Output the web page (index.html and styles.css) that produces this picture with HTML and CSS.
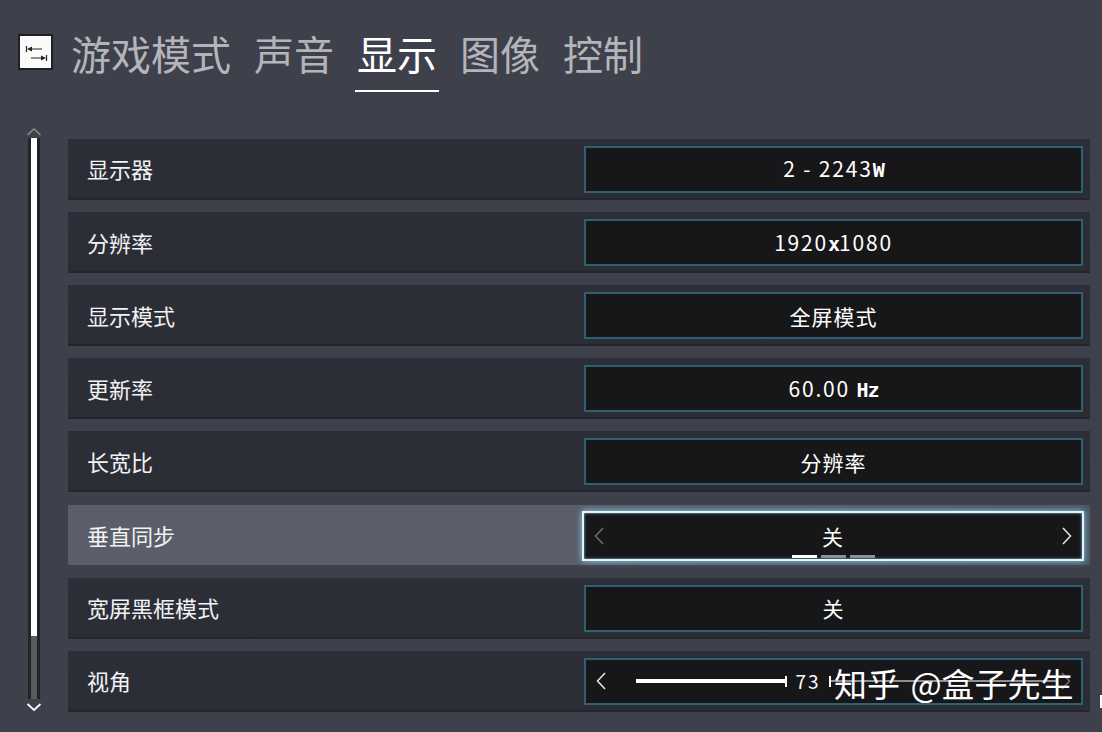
FILE: index.html
```html
<!DOCTYPE html>
<html lang="zh-CN">
<head>
  <meta charset="UTF-8" />
  <title>显示</title>
  <link rel="stylesheet" href="styles.css">
</head>
<body>
  <header class="tabs">
    <div class="tabs-icon">
      <svg width="27" height="27" viewBox="0 0 27 27">
        <path d="M4.500 7v6M8 10h12M24.500 16v6M9 19h12" fill="none" stroke="#222" stroke-width="1.200"/>
        <path d="M5 10l5-2.500v5zM24 19l-5-2.500v5z" fill="#222"/>
      </svg>
    </div>
    <a class="tab">游戏模式</a>
    <a class="tab">声音</a>
    <a class="tab active">显示</a>
    <a class="tab">图像</a>
    <a class="tab">控制</a>
  </header>

  <main class="content">
    <div class="scroll">
      <svg class="chevron" width="16" height="9" viewBox="0 0 16 9"><path d="M1.500 8L8 2l6.500 6" fill="none" stroke="#8b8d93" stroke-width="1.500"/></svg>
      <div class="scroll-track"><div class="scroll-thumb"></div></div>
      <svg class="chevron" width="16" height="9" viewBox="0 0 16 9"><path d="M1.500 1L8 7l6.500-6" fill="none" stroke="#fff" stroke-width="1.800"/></svg>
    </div>

    <div class="rows">
      <div class="row">
        <span class="label">显示器</span>
        <div class="box"><span class="value latin">2 - 2243<b class="alt">W</b></span></div>
      </div>
      <div class="row">
        <span class="label">分辨率</span>
        <div class="box"><span class="value latin">1920<b class="alt">x</b>1080</span></div>
      </div>
      <div class="row">
        <span class="label">显示模式</span>
        <div class="box"><span class="value">全屏模式</span></div>
      </div>
      <div class="row">
        <span class="label">更新率</span>
        <div class="box"><span class="value latin">60.00 <b class="alt">Hz</b></span></div>
      </div>
      <div class="row">
        <span class="label">长宽比</span>
        <div class="box"><span class="value">分辨率</span></div>
      </div>
      <div class="row selected">
        <span class="label">垂直同步</span>
        <div class="box focus">
          <svg class="arrow dim" width="10" height="18" viewBox="0 0 10 18"><path d="M9 1L1.500 9 9 17" fill="none" stroke="currentColor" stroke-width="1.500"/></svg>
          <span class="value">关</span>
          <svg class="arrow" width="10" height="18" viewBox="0 0 10 18"><path d="M1 1l7.500 8L1 17" fill="none" stroke="currentColor" stroke-width="1.500"/></svg>
          <div class="pips"><i class="pip on"></i><i class="pip"></i><i class="pip"></i></div>
        </div>
      </div>
      <div class="row">
        <span class="label">宽屏黑框模式</span>
        <div class="box"><span class="value">关</span></div>
      </div>
      <div class="row">
        <span class="label">视角</span>
        <div class="box slider">
          <svg class="arrow" width="10" height="18" viewBox="0 0 10 18"><path d="M9 1L1.500 9 9 17" fill="none" stroke="currentColor" stroke-width="1.500"/></svg>
          <div class="fill"></div>
          <span class="slider-num">73</span>
          <div class="rest"></div>
          <svg class="arrow dim" width="10" height="18" viewBox="0 0 10 18"><path d="M1 1l7.500 8L1 17" fill="none" stroke="currentColor" stroke-width="1.500"/></svg>
        </div>
      </div>
    </div>
  </main>

  <div class="watermark">知乎 @盒子先生</div>
  <div class="edge-mark"></div>
</body>
</html>
```

FILE: styles.css
```css
html, body {
  margin: 0;
  height: 732px;
  overflow: hidden;
}
body {
  position: relative;
  box-sizing: border-box;
  padding: 0 12px 0 18px;
  background: #3e404b;
  color: #fff;
  font-family: "Noto Sans CJK SC", "Noto Sans", sans-serif;
}
.tabs {
  display: flex;
  align-items: flex-start;
  height: 127px;
}
.tabs-icon {
  display: flex;
  align-items: center;
  justify-content: center;
  box-sizing: border-box;
  width: 35px;
  height: 36px;
  margin-top: 34px;
  margin-right: 16px;
  background: #fafafa;
  border: 2px solid #1f2024;
}
.tab {
  box-sizing: border-box;
  height: 92px;
  margin-right: 19px;
  padding: 25px 2px 0;
  color: #b4b5ba;
  font-size: 40px;
  font-weight: 400;
  line-height: 56px;
  white-space: nowrap;
}
.tab.active {
  color: #fff;
  border-bottom: 2px solid #fff;
}
.content {
  display: flex;
  align-items: flex-start;
}
.scroll {
  display: flex;
  flex-direction: column;
  align-items: center;
  width: 32px;
  margin-right: 18px;
}
.chevron {
  display: block;
}
.scroll-track {
  box-sizing: border-box;
  width: 12px;
  height: 561px;
  margin: 2px 0 4px;
  padding: 0 3px;
  background: linear-gradient(#5a5b5e, #5a5b5e) center / 6px 100% no-repeat #232428;
}
.scroll-thumb {
  height: 498px;
  background: #fff;
}
.rows {
  display: flex;
  flex-direction: column;
  gap: 12.14px;
  flex: 1;
  margin-top: 11.9px;
}
.row {
  display: flex;
  align-items: center;
  justify-content: space-between;
  box-sizing: border-box;
  height: 61px;
  padding: 2px 7px 0 19px;
  background: linear-gradient(#2c2f38, #2b2d35);
  border-bottom: 2px solid #25262c;
}
.row.selected {
  height: 60px;
  margin-bottom: 1px;
  padding-right: 6px;
  background: linear-gradient(90deg, #5a5e69 0, #5a5e69 50%, #4b5560 100%);
  border-bottom: 0;
}
.label {
  margin-bottom: 2px;
  color: #f2f2f3;
  font-size: 22px;
  line-height: 30px;
}
.box {
  position: relative;
  display: flex;
  align-items: center;
  justify-content: center;
  box-sizing: border-box;
  width: 499px;
  height: 47px;
  background: #171719;
  border: 2px solid #2f5f72;
}
.value {
  font-size: 21px;
  letter-spacing: 1px;
  line-height: 30px;
  white-space: pre;
}
.value.latin {
  letter-spacing: 1.8px;
}
.alt {
  font-family: "DejaVu Sans Mono", monospace;
  font-size: 20px;
  font-weight: 700;
  letter-spacing: -1px;
}
.box.focus {
  justify-content: space-between;
  width: 502px;
  height: 50px;
  padding: 0 10px;
  border: 2px solid #e3f5fb;
  box-shadow: 0 0 6px #8fd8ef, inset 0 0 3px #7fc8e0;
}
.arrow {
  flex: none;
  color: #e8e8e8;
}
.arrow.dim {
  color: #6e6f71;
}
.pips {
  position: absolute;
  left: 208px;
  bottom: 1px;
  display: flex;
  gap: 4px;
}
.pip {
  width: 25px;
  height: 3px;
  background: #8e8f92;
}
.pip.on {
  background: #fff;
}
.box.slider {
  justify-content: flex-start;
  padding: 0 10px;
}
.fill {
  box-sizing: border-box;
  width: 151px;
  height: 11px;
  margin-left: 30px;
  background: linear-gradient(#fff, #fff) left center / 100% 4px no-repeat;
  border-right: 2px solid #fff;
}
.slider-num {
  width: 42px;
  text-align: center;
  font-size: 19px;
  letter-spacing: 2px;
  line-height: 24px;
}
.rest {
  box-sizing: border-box;
  flex: 1;
  height: 11px;
  margin-right: 4px;
  background: linear-gradient(#8e8f92, #8e8f92) left center / 100% 2px no-repeat;
  border-left: 2px solid #fff;
}
.watermark {
  position: absolute;
  left: 834px;
  top: 658px;
  color: #fff;
  font-size: 33px;
  word-spacing: 3px;
  line-height: 50px;
  white-space: nowrap;
}
.edge-mark {
  position: absolute;
  left: 1100px;
  top: 695px;
  width: 2px;
  height: 13px;
  background: #fff;
}
```
